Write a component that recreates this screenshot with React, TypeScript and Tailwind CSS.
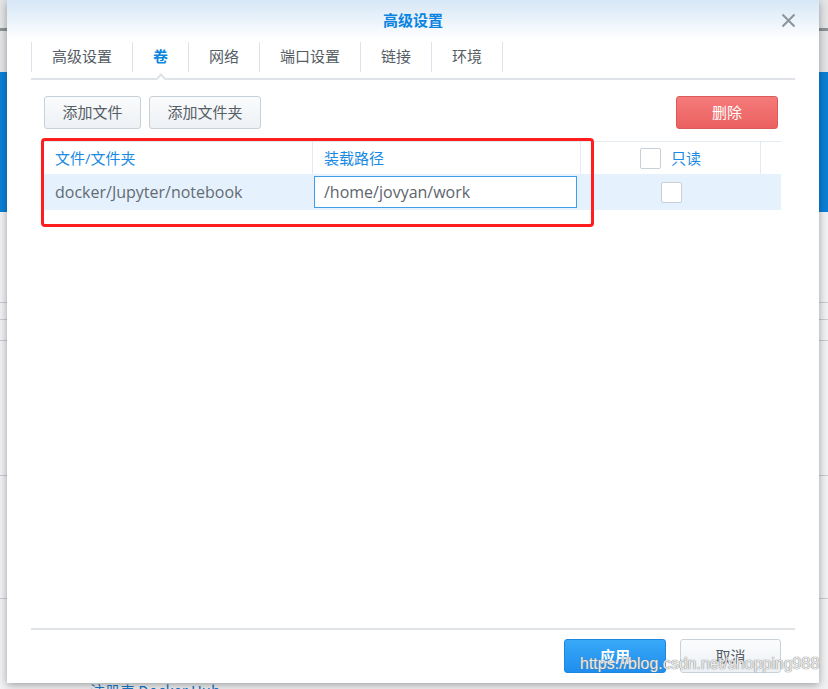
import React from 'react'

const tabs = ['高级设置', '卷', '网络', '端口设置', '链接', '环境']

const sans = "font-['Open_Sans','Noto_Sans_CJK_SC',sans-serif]"

const Backdrop = () => (
  <div className="absolute inset-0 flex flex-col bg-[#f1f2f3]">
    <div className="h-[72px] bg-[#e3e5e7] flex flex-col">
      <div className="h-[28px]" />
      <div className="h-[3px] bg-[#8c9296]" />
    </div>
    <div className="h-[140px] bg-[#0b80d6]" />
    <div className="h-[90px]" />
    <div className="h-px bg-[#c9cdd1]" />
    <div className="h-[16px]" />
    <div className="h-px bg-[#c9cdd1]" />
    <div className="h-[20px]" />
    <div className="h-px bg-[#c9cdd1]" />
    <div className="h-[134px]" />
    <div className="h-px bg-[#c9cdd1]" />
    <div className="h-[122px]" />
    <div className="h-px bg-[#c9cdd1]" />
    <div className="flex-1" />
    <div className="h-[6px] flex items-start pl-[90px] overflow-hidden">
      <span className="text-[15px] leading-[15px] text-[#1a78c8] font-['Noto_Sans_CJK_SC',sans-serif]">注册表 Docker Hub</span>
    </div>
  </div>
)

const Checkbox = () => (
  <span className="w-[21px] h-[21px] bg-white border border-[#c7d0d8] rounded-[2px] inline-block" />
)

export default function App() {
  return (
    <div className={`relative w-[828px] h-[689px] overflow-hidden ${sans}`}>
      <Backdrop />

      <div className="absolute left-[7px] top-0 w-[812px] h-[683px] bg-white shadow-[0_2px_8px_rgba(0,0,0,0.35)] flex flex-col">
        {/* title bar */}
        <div className="relative h-[40px] flex items-center justify-center bg-linear-to-b from-[#d6e7f6] to-white">
          <span className="text-[15px] font-bold text-[#0a84e0]">高级设置</span>
          <svg className="absolute right-[23px] top-[13px]" width="15" height="15" viewBox="0 0 15 15">
            <path d="M1.5 1.5 L13.5 13.5 M13.5 1.5 L1.5 13.5" stroke="#8b949c" strokeWidth="2" />
          </svg>
        </div>

        {/* tabs */}
        <div className="mx-6 h-[40px] pt-[2px] flex items-start border-b-2 border-[#dfe3e7]">
          {tabs.map((t, i) => (
            <div
              key={t}
              className={`relative h-[30px] flex items-center px-5 pb-[2px] text-[15px] border-r border-[#dbe3eb] ${i === 0 ? 'border-l' : ''} ${i === 1 ? 'text-[#0a86e0] font-bold' : 'text-[#555d65]'}`}
            >
              {t}
              {i === 1 && (
                <span className="absolute left-1/2 -bottom-[11px] -ml-[4px] w-[8px] h-[8px] rotate-45 bg-white border-l-2 border-t-2 border-[#dfe3e7]" />
              )}
            </div>
          ))}
        </div>

        {/* volume list */}
        <div className="relative pl-[37px] pr-[38px] pt-[16px]">
          <div className="flex items-center justify-between">
            <div className="flex gap-2">
              <button className="h-[33px] w-[97px] rounded-[3px] border border-[#c8d0d8] bg-linear-to-b from-[#fafbfc] to-[#edf1f5] text-[15px] text-[#555d65]">添加文件</button>
              <button className="h-[33px] w-[112px] rounded-[3px] border border-[#c8d0d8] bg-linear-to-b from-[#fafbfc] to-[#edf1f5] text-[15px] text-[#555d65]">添加文件夹</button>
            </div>
            <button className="mr-[3px] h-[33px] w-[102px] rounded-[3px] border border-[#dc5a5a] bg-linear-to-b from-[#f57b7b] to-[#eb6060] text-[15px] text-white">删除</button>
          </div>

          <div className="mt-[12px] grid grid-cols-[269px_268px_180px_20px]">
            <div className="h-[33px] flex items-center pl-[11px] text-[15px] text-[#1a8ae2] border-t border-r border-[#e2eaf2]">文件/文件夹</div>
            <div className="h-[33px] flex items-center pl-[11px] text-[15px] text-[#1a8ae2] border-t border-r border-[#e2eaf2]">装载路径</div>
            <div className="h-[33px] flex items-center justify-center gap-[10px] text-[15px] text-[#1a8ae2] border-t border-r border-[#e2eaf2]">
              <Checkbox />
              <span>只读</span>
            </div>
            <div className="h-[33px] border-t border-[#e2eaf2]" />

            <div className="h-[36px] flex items-center pl-[11px] text-[16px] text-[#636b73] bg-[#e5f2fd]">docker/Jupyter/notebook</div>
            <div className="h-[36px] bg-[#e5f2fd] pl-px pr-[4px] pt-[2px]">
              <div className="h-[32px] flex items-center pl-[9px] bg-white border-[1.5px] border-[#3c9fe7] text-[16px] text-[#5d656d]">/home/jovyan/work</div>
            </div>
            <div className="h-[36px] flex items-center justify-center bg-[#e5f2fd]">
              <Checkbox />
            </div>
            <div className="h-[36px] bg-[#e5f2fd]" />
          </div>

          <div className="absolute left-[34px] top-[58px] w-[553px] h-[89px] border-[3px] border-[#ff1d1d] rounded-[4px]" />
        </div>

        <div className="flex-1" />

        {/* footer */}
        <div className="mx-6 border-t-2 border-[#e1e4e7]" />
        <div className="flex justify-end gap-[14px] pr-[38px] pt-[9px] pb-[10px]">
          <button className="h-[34px] w-[102px] rounded-[3px] border border-[#1c87de] bg-linear-to-b from-[#38a8f8] to-[#1d8eee] text-[15px] font-bold text-white">应用</button>
          <button className="h-[34px] w-[101px] rounded-[3px] border border-[#c9d1d8] bg-linear-to-b from-[#fbfcfd] to-[#edf1f5] text-[15px] text-[#555d65]">取消</button>
        </div>
      </div>

      <div className="absolute left-[580px] top-[654px] whitespace-nowrap text-[16px] leading-[20px] text-white/85 font-['Liberation_Sans',sans-serif] [text-shadow:0_0_1px_#7a7a7a,0_0_1px_#7a7a7a]">
        https://blog.csdn.net/shopping988
      </div>
    </div>
  )
}
